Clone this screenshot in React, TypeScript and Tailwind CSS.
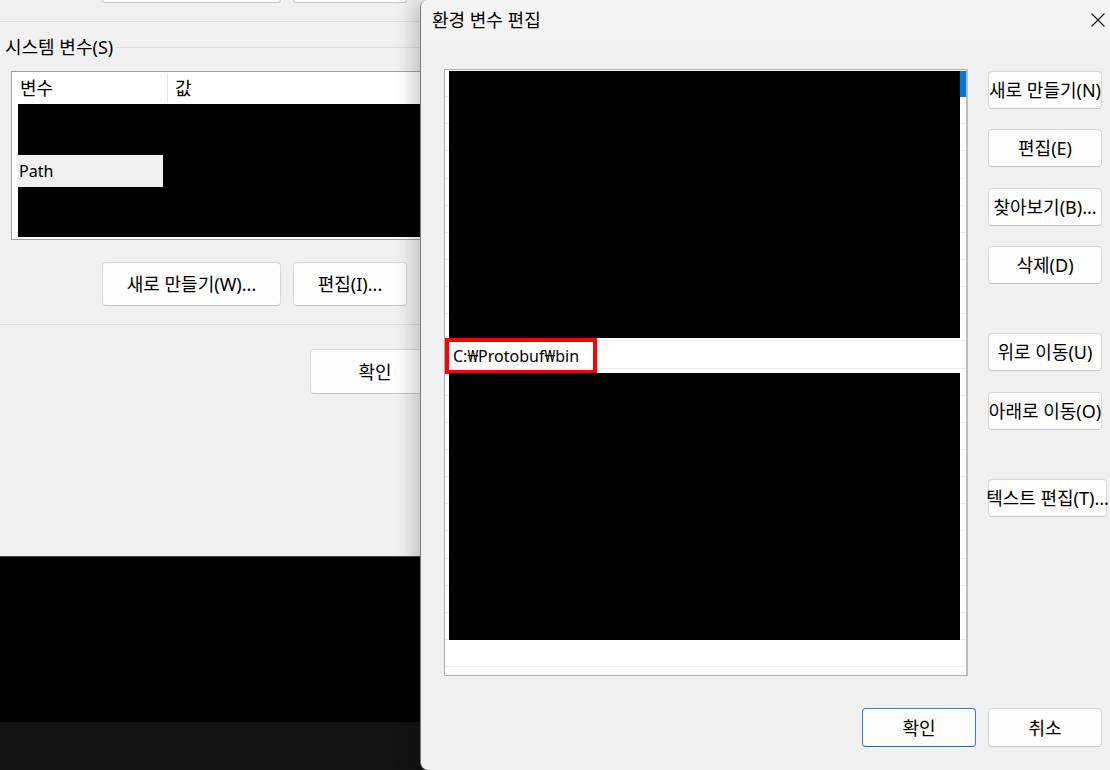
import React from 'react';

const FONT = { fontFamily: '"Noto Sans", "Noto Sans CJK KR", sans-serif' };

// Windows 11 style push button
function WinButton({
  label,
  className = '',
  primary = false,
}: {
  label: string;
  className?: string;
  primary?: boolean;
}) {
  return (
    <button
      type="button"
      className={`flex shrink-0 items-center justify-center whitespace-nowrap rounded-[4px] border bg-[#fdfdfd] text-[18px] leading-none text-black ${
        primary ? 'border-[#2f7fd4] border-b-[#1d67b8]' : 'border-[#d6d6d6] border-b-[#c4c4c4]'
      } ${className}`}
    >
      {label}
    </button>
  );
}

// Background window: 환경 변수 (partially covered)
function EnvVarsWindow() {
  return (
    <div className="flex h-full w-[428px] shrink-0 flex-col overflow-hidden bg-[#f0f0f0]">
      {/* bottoms of the user variable buttons, cut by the screen top */}
      <div className="flex h-[3px]">
        <div className="ml-[102px] w-[179px] rounded-b-[4px] border border-t-0 border-[#c8c8c8] bg-[#fdfdfd]" />
        <div className="ml-[12px] w-[114px] rounded-b-[4px] border border-t-0 border-[#c8c8c8] bg-[#fdfdfd]" />
      </div>

      <div className="mt-[18px] h-px bg-[#dcdcdc]" />

      {/* group box label */}
      <div className="mt-[15px] flex h-[20px] items-center">
        <span className="pl-[5px] text-[18px] leading-none text-black">시스템 변수(S)</span>
        <div className="ml-[3px] h-px flex-1 bg-[#dcdcdc]" />
      </div>

      {/* list view */}
      <div className="mt-[14px] ml-[11px] h-[169px] w-[440px] shrink-0 border border-[#a0a0a0] bg-white">
        <div className="flex h-[32px] items-center text-[18px] leading-none text-black">
          <div className="w-[155px] pl-[8px]">변수</div>
          <div className="h-[28px] w-px bg-[#e5e5e5]" />
          <div className="pl-[7px]">값</div>
        </div>
        <div className="flex h-[133px] pl-[5px]">
          <div className="flex w-[146px] flex-col">
            <div className="ml-px h-[51px] bg-black" />
            <div className="flex h-[32px] items-center bg-[#f0f0f0] pl-[2px] text-[16px] leading-none text-black">
              Path
            </div>
            <div className="ml-px h-[50px] bg-black" />
          </div>
          <div className="flex-1 bg-black" />
        </div>
      </div>

      <div className="mt-[22px] flex">
        <WinButton label="새로 만들기(W)..." className="ml-[102px] h-[44px] w-[179px]" />
        <WinButton label="편집(I)..." className="ml-[12px] h-[44px] w-[114px]" />
      </div>

      <div className="mt-[18px] h-px bg-[#dcdcdc]" />

      <div className="mt-[24px] flex">
        <WinButton label="확인" className="ml-[310px] h-[45px] w-[130px]" />
      </div>

      {/* window behind, redacted */}
      <div className="mt-auto flex h-[214px] flex-col border-t border-[#4a4a4a]">
        <div className="h-[165px] bg-black" />
        <div className="flex-1 bg-[#131313]" />
      </div>
    </div>
  );
}

// Foreground dialog: 환경 변수 편집
function EditDialog() {
  const sideButtons = [
    { label: '새로 만들기(N)', gap: 'mt-[2px]' },
    { label: '편집(E)', gap: 'mt-[20px]' },
    { label: '찾아보기(B)...', gap: 'mt-[21px]' },
    { label: '삭제(D)', gap: 'mt-[20px]' },
    { label: '위로 이동(U)', gap: 'mt-[49px]' },
    { label: '아래로 이동(O)', gap: 'mt-[21px]' },
  ];

  return (
    <div className="relative z-10 -ml-[8px] flex h-full flex-1 flex-col overflow-hidden rounded-l-[8px] border-l border-[#7c7c7c] bg-[#f0f0f0] shadow-[-8px_0_18px_rgba(0,0,0,0.18)]">
      {/* title bar */}
      <div className="flex h-[40px] shrink-0 items-center bg-[#f3f3f3] pl-[11px] pr-[4px]">
        <span className="text-[18px] leading-none text-black">환경 변수 편집</span>
        <svg className="ml-auto" width="16" height="16" viewBox="0 0 16 16" fill="none">
          <path d="M1.5 1.5L14.5 14.5M14.5 1.5L1.5 14.5" stroke="#1b1b1b" strokeWidth="1.1" />
        </svg>
      </div>

      <div className="flex flex-1 flex-col pl-[23px] pr-[8px] pt-[29px]">
        <div className="flex">
          {/* path list */}
          <div className="flex h-[607px] w-[524px] shrink-0 flex-col border border-r-2 border-[#adadad] border-r-[#bdbdbd] bg-white bg-[repeating-linear-gradient(to_bottom,transparent_0px,transparent_26.14px,#ececec_26.14px,#ececec_27.14px)]">
            <div className="flex h-[268px]">
              <div className="ml-[4px] mt-px flex-1 bg-black" />
              <div className="w-[6px]">
                <div className="mt-px h-[26px] bg-[#0078d4]" />
              </div>
            </div>
            <div className="h-[35px]">
              <div className="flex h-[36px] w-[152px] items-center border-4 border-[#ff0000] bg-white pl-[4px] text-[16px] leading-none text-black">
                C:₩Protobuf₩bin
              </div>
            </div>
            <div className="ml-[4px] mr-[6px] h-[267px] bg-black" />
            <div className="flex-1" />
          </div>

          {/* action buttons */}
          <div className="ml-[20px] flex flex-col">
            {sideButtons.map((b) => (
              <WinButton key={b.label} label={b.label} className={`${b.gap} h-[38px] w-[114px]`} />
            ))}
            <WinButton label="텍스트 편집(T)..." className="mt-[49px] h-[38px] w-[119px]" />
          </div>
        </div>

        <div className="mt-[32px] flex justify-end gap-[12px]">
          <WinButton label="확인" primary className="h-[39px] w-[114px]" />
          <WinButton label="취소" className="h-[39px] w-[114px]" />
        </div>
      </div>
    </div>
  );
}

export default function App() {
  return (
    <div className="flex h-[770px] w-[1110px] overflow-hidden bg-[#f0f0f0]" style={FONT}>
      <EnvVarsWindow />
      <EditDialog />
    </div>
  );
}
